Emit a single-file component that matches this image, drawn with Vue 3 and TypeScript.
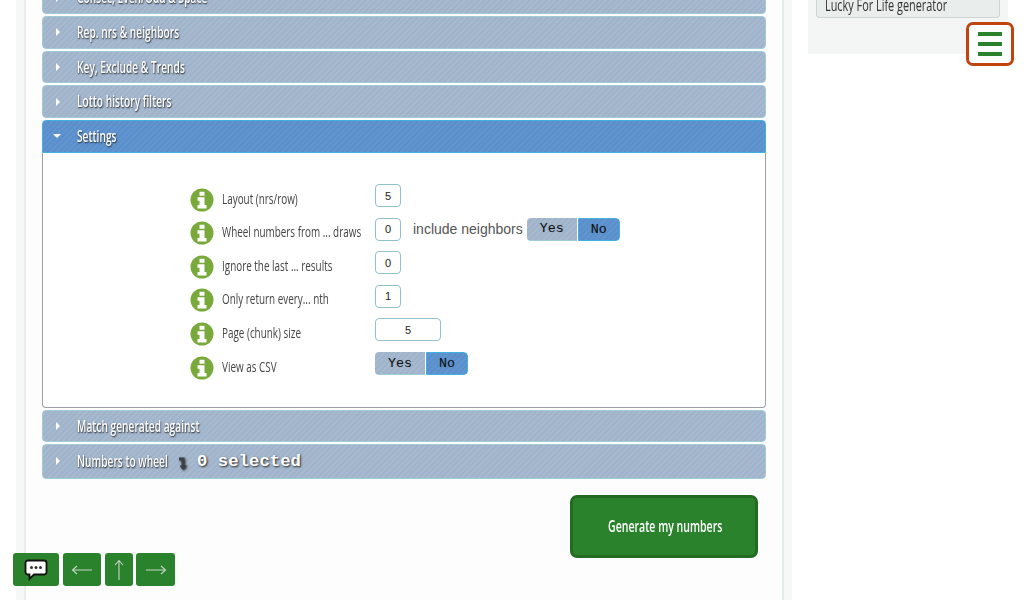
<script setup lang="ts">
interface Row { label: string; value?: string; wide?: boolean; toggle?: boolean; neighbors?: boolean }
const topPanels = ['Consec, Even/Odd & Space', 'Rep. nrs & neighbors', 'Key, Exclude & Trends', 'Lotto history filters']
const rows: Row[] = [
  { label: 'Layout (nrs/row)', value: '5' },
  { label: 'Wheel numbers from ... draws', value: '0', neighbors: true },
  { label: 'Ignore the last ... results', value: '0' },
  { label: 'Only return every... nth', value: '1' },
  { label: 'Page (chunk) size', value: '5', wide: true },
  { label: 'View as CSV', toggle: true },
]
</script>

<template>
  <div class="page">
    <div class="band">
      <main class="column">
        <section v-for="p in topPanels" :key="p" class="head">
          <span class="tri"></span><span class="cond"><span class="shrink">{{ p }}</span></span>
        </section>
        <section class="head active">
          <span class="tri down"></span><span class="cond"><span class="shrink">Settings</span></span>
        </section>
        <div class="body">
          <div class="form">
            <div v-for="r in rows" :key="r.label" class="row">
              <svg class="info" viewBox="0 0 24 24" width="24" height="24">
                <circle cx="12" cy="12" r="11.5" fill="#78a93a" />
                <path d="M9.500 3.800h5v4h-5zM7.500 9.300h7v7.700h2v3.400H7.500V17h2v-4.300h-2z" fill="#fff" />
              </svg>
              <span class="label"><span class="shrink">{{ r.label }}</span></span>
              <span v-if="r.value" class="input" :class="{ wide: r.wide }">{{ r.value }}</span>
              <span v-if="r.toggle" class="toggle">
                <span class="opt yes">Yes</span><span class="opt no">No</span>
              </span>
              <template v-if="r.neighbors">
                <span class="incl">include neighbors</span>
                <span class="toggle">
                  <span class="opt yes">Yes</span><span class="opt no">No</span>
                </span>
              </template>
            </div>
          </div>
        </div>
        <section class="head match">
          <span class="tri"></span><span class="cond"><span class="shrink">Match generated against</span></span>
        </section>
        <section class="head wheel">
          <span class="tri"></span><span class="cond nums"><span class="shrink">Numbers to wheel</span></span>
          <svg class="turn" viewBox="0 0 10 14" width="10" height="14">
            <path d="M1 1.500h5.500V9.500H9L5 14 1.500 9.500h2V4.500H1z" fill="#3a4047" />
          </svg>
          <span class="sel">0 selected</span>
        </section>
        <div class="actions">
          <button class="gen"><span class="shrink">Generate my numbers</span></button>
        </div>
      </main>
    </div>
    <aside class="side">
      <div class="side-box">
        <div class="side-btn"><span class="shrink">Lucky For Life generator</span></div>
      </div>
    </aside>

    <button class="burger" aria-label="menu"><i></i><i></i><i></i></button>

    <nav class="float">
      <button class="fb chat" aria-label="comment">
        <svg viewBox="0 0 24 22" width="24" height="22">
          <path d="M4 1.500h16a2.500 2.500 0 0 1 2.500 2.500v9a2.500 2.500 0 0 1-2.500 2.500H10l-4.500 4.500v-4.500H4A2.500 2.500 0 0 1 1.500 13V4A2.500 2.500 0 0 1 4 1.500z" fill="#fff" stroke="#111" stroke-width="1.800" />
          <circle cx="7.500" cy="8.500" r="1.500" fill="#333" /><circle cx="12" cy="8.500" r="1.500" fill="#333" /><circle cx="16.500" cy="8.500" r="1.500" fill="#333" />
        </svg>
      </button>
      <button class="fb b2" aria-label="previous">
        <svg viewBox="0 0 22 10" width="22" height="10"><path d="M21 5H1.500M6 1 1.500 5 6 9" class="arrow" /></svg>
      </button>
      <button class="fb b3" aria-label="top">
        <svg viewBox="0 0 10 22" width="10" height="22"><path d="M5 21V1.500M1 6l4-4.500L9 6" class="arrow" /></svg>
      </button>
      <button class="fb b4" aria-label="next">
        <svg viewBox="0 0 22 10" width="22" height="10"><path d="M1 5h19.500M16 1l4.500 4L16 9" class="arrow" /></svg>
      </button>
    </nav>
  </div>
</template>

<style>
html, body { margin: 0; height: 100%; overflow: hidden; background: #fff; }
</style>

<style scoped>
.page {
  position: relative;
  width: 1024px;
  height: 600px;
  overflow: hidden;
  display: flex;
  align-items: flex-start;
  background: #fff;
  font-family: "Open Sans", "Liberation Sans", sans-serif;
}
.band {
  box-sizing: border-box;
  flex: none;
  width: 776px;
  height: 600px;
  margin-left: 16px;
  padding: 0 8px;
  background: #f6f8f7;
}
.column {
  box-sizing: border-box;
  height: 620px;
  margin-top: -18.700px;
  padding: 0 16px;
  border-left: 2px solid #e9eeec;
  border-right: 2px solid #e4ecea;
  background: #fdfdfd;
}
.head {
  box-sizing: border-box;
  height: 32.700px;
  margin-bottom: 2px;
  display: flex;
  align-items: center;
  border: 1px solid #9fcbd6;
  border-radius: 4px;
  color: #fff;
  background: repeating-linear-gradient(135deg, #9fb3cb 0 2px, #a7b9cf 2px 4px);
  text-shadow: 1px 1px 2px #222;
}
.head.active {
  border-color: #3fb0e0;
  border-radius: 4px 4px 0 0;
  margin-bottom: 0;
  background: repeating-linear-gradient(135deg, #5a8fcc 0 2px, #6195d0 2px 4px);
}
.head.match { height: 32px; margin-top: 2.300px; margin-bottom: 2px; }
.head.wheel { height: 34.700px; }
.tri {
  width: 0;
  height: 0;
  margin: 0 17px 0 13px;
  border-left: 4px solid #fff;
  border-top: 4px solid transparent;
  border-bottom: 4px solid transparent;
  flex: none;
}
.tri.down {
  margin: 0 16px 0 10px;
  border-top: 4px solid #fff;
  border-left: 4px solid transparent;
  border-right: 4px solid transparent;
  border-bottom: 0;
}
.cond { font-size: 17px; font-weight: 600; white-space: nowrap; margin-top: -2px; }
.cond.nums { width: 100px; flex: none; }
.shrink { display: inline-block; transform: scaleX(0.6); transform-origin: left center; white-space: nowrap; }
.body {
  box-sizing: border-box;
  height: 255px;
  border: 1px solid #9aa0a5;
  border-top: 0;
  border-radius: 0 0 4px 4px;
  background: #fff;
  padding: 30px 0 0 147px;
}
.form { display: flex; flex-direction: column; }
.row {
  height: 33.600px;
  display: flex;
  align-items: center;
}
.info { flex: none; margin-right: 8px; }
.label { width: 153px; flex: none; margin-top: -4px; font-size: 15px; color: #444; }
.label .shrink { transform: scaleX(0.66); }
.input {
  box-sizing: border-box;
  width: 26px;
  height: 23px;
  margin-top: -8px;
  display: flex;
  align-items: center;
  justify-content: center;
  border: 1px solid #8fc1cc;
  border-radius: 4px;
  background: #fff;
  color: #222;
  font: 11px "Liberation Sans", sans-serif;
}
.input.wide { width: 66px; }
.incl { margin: -8px 4px 0 12px; font: 14px "Liberation Sans", sans-serif; color: #555; }
.toggle { display: inline-flex; margin-top: -8px; border-radius: 4px; overflow: hidden; height: 23px; }
.opt {
  display: flex;
  align-items: center;
  justify-content: center;
  font: 13.330px "Liberation Mono", monospace;
  color: #111;
  text-shadow: 0 0 1px rgba(0, 0, 0, 0.2);
  box-sizing: border-box;
}
.yes {
  width: 50px;
  background: repeating-linear-gradient(135deg, #9fb3cb 0 2px, #a7b9cf 2px 4px);
  border-bottom: 1px solid #9fcbd6;
}
.no {
  width: 42px;
  margin-left: 1px;
  background: repeating-linear-gradient(135deg, #5a8fcc 0 2px, #6195d0 2px 4px);
  border: 1px solid #3fb0e0;
  border-radius: 0 4px 4px 0;
}
.turn { margin: 3px 8px 0 1px; flex: none; filter: drop-shadow(1px 1px 1px #333); }
.sel {
  margin-left: 1px;
  font: bold 17.330px "Liberation Mono", monospace;
  color: #fff;
  text-shadow: 1px 1px 2px #222;
}
.actions { display: flex; justify-content: flex-end; padding: 14px 8px 0 0; }
.gen {
  box-sizing: border-box;
  width: 188px;
  height: 63px;
  border: 3px solid #246b22;
  border-radius: 7px;
  background: #2a832c;
  color: #fff;
  font: 600 17px "Open Sans", sans-serif;
  text-align: center;
  padding: 0 0 2px;
}
.gen .shrink { transform-origin: center; transform: scaleX(0.62); }
.side { flex: none; margin-left: 16px; width: 200px; }
.side-box {
  box-sizing: border-box;
  width: 200px;
  height: 54px;
  padding: 0 8px;
  background: #f4f6f5;
}
.side-btn {
  box-sizing: border-box;
  height: 18px;
  display: flex;
  align-items: flex-end;
  padding: 0 0 2px 8px;
  border: 1px solid #cdd5d2;
  border-top: 0;
  border-radius: 0 0 4px 4px;
  background: #e9edeb;
  color: #333;
  font-size: 16px;
  line-height: 20px;
  overflow: hidden;
}
.side-btn .shrink { transform: scaleX(0.68); }
.burger {
  position: absolute;
  left: 966px;
  top: 22px;
  box-sizing: border-box;
  width: 48px;
  height: 44px;
  padding: 0;
  border: 3px solid #c1440e;
  border-radius: 7px;
  background: #fff;
  display: flex;
  flex-direction: column;
  align-items: center;
  justify-content: center;
  gap: 6px;
}
.burger i { display: block; width: 24px; height: 4px; background: #2a832c; }
.float { position: absolute; left: 13px; top: 553px; display: flex; gap: 4px; }
.fb {
  box-sizing: border-box;
  height: 33px;
  padding: 0;
  border: 0;
  border-radius: 3px;
  background: #2a832c;
  display: flex;
  align-items: center;
  justify-content: center;
}
.arrow { fill: none; stroke: #c8d2c8; stroke-width: 1.100; }
.chat { width: 46px; }
.b2 { width: 38px; }
.b3 { width: 28px; }
.b4 { width: 39px; margin-left: -1px; }
</style>
